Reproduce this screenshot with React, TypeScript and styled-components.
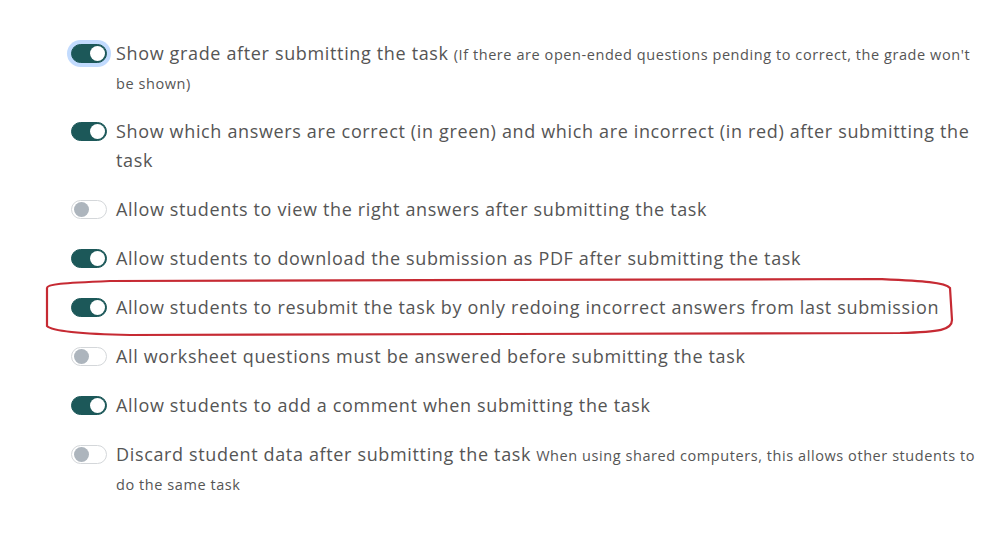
import styled, { createGlobalStyle } from "styled-components";

const GlobalStyle = createGlobalStyle`
  html, body {
    margin: 0;
    padding: 0;
    background: #ffffff;
  }
  body {
    font-family: "Open Sans", "Liberation Sans", sans-serif;
    color: #555555;
  }
`;

const SPage = styled.div`
  position: relative;
  width: 1000px;
  height: 540px;
  box-sizing: border-box;
  padding: 39px 20px 0 71px;
`;

const SList = styled.div`
  display: flex;
  flex-direction: column;
  gap: 20px;
`;

const SRow = styled.label`
  display: flex;
  align-items: flex-start;
  gap: 9px;
`;

const SSwitch = styled.span<{ $on: boolean; $focus?: boolean }>`
  flex: 0 0 auto;
  position: relative;
  box-sizing: border-box;
  width: 36px;
  height: 19px;
  margin-top: 5px;
  border-radius: 10px;
  background: ${p => (p.$on ? "#1c5859" : "#ffffff")};
  border: 1px solid ${p => (p.$on ? "#1c5859" : "#d4d7da")};
  box-shadow: ${p => (p.$focus ? "0 0 0 4px rgba(13, 110, 253, 0.25)" : "none")};

  &::after {
    content: "";
    position: absolute;
    top: 1px;
    left: ${p => (p.$on ? "18px" : "2px")};
    width: 15px;
    height: 15px;
    border-radius: 50%;
    background: ${p => (p.$on ? "#ffffff" : "#adb5bd")};
  }
`;

const SText = styled.span`
  font-size: 18px;
  line-height: 29px;
  letter-spacing: 0.65px;
`;

const SNote = styled.span`
  font-size: 14.5px;
  line-height: 1;
  letter-spacing: 0.57px;
  margin-left: 5px;
`;

const SMark = styled.svg`
  position: absolute;
  left: 0;
  top: 0;
  pointer-events: none;
`;

interface Option {
  label: string;
  note?: string;
  on: boolean;
  focus?: boolean;
}

const options: Option[] = [
  {
    label: "Show grade after submitting the task",
    note: "(If there are open-ended questions pending to correct, the grade won't be shown)",
    on: true,
    focus: true,
  },
  {
    label:
      "Show which answers are correct (in green) and which are incorrect (in red) after submitting the task",
    on: true,
  },
  { label: "Allow students to view the right answers after submitting the task", on: false },
  { label: "Allow students to download the submission as PDF after submitting the task", on: true },
  {
    label:
      "Allow students to resubmit the task by only redoing incorrect answers from last submission",
    on: true,
  },
  { label: "All worksheet questions must be answered before submitting the task", on: false },
  { label: "Allow students to add a comment when submitting the task", on: true },
  {
    label: "Discard student data after submitting the task",
    note: "When using shared computers, this allows other students to do the same task",
    on: false,
  },
];

export default function App() {
  return (
    <SPage>
      <GlobalStyle />
      <SList>
        {options.map(o => (
          <SRow key={o.label}>
            <SSwitch $on={o.on} $focus={o.focus} />
            <SText>
              {o.label}
              {o.note && <SNote>{o.note}</SNote>}
            </SText>
          </SRow>
        ))}
      </SList>
      <SMark width="1000" height="540" viewBox="0 0 1000 540">
        <path
          d="M 47 288 C 47 284, 62 283, 110 281 L 880 279 C 922 281, 945 282, 950 288 L 952 320 C 952 330, 940 332, 900 333 L 130 335 C 80 334, 52 331, 47 326 Z"
          fill="none"
          stroke="#c62a33"
          strokeWidth="2.2"
        />
      </SMark>
    </SPage>
  );
}
